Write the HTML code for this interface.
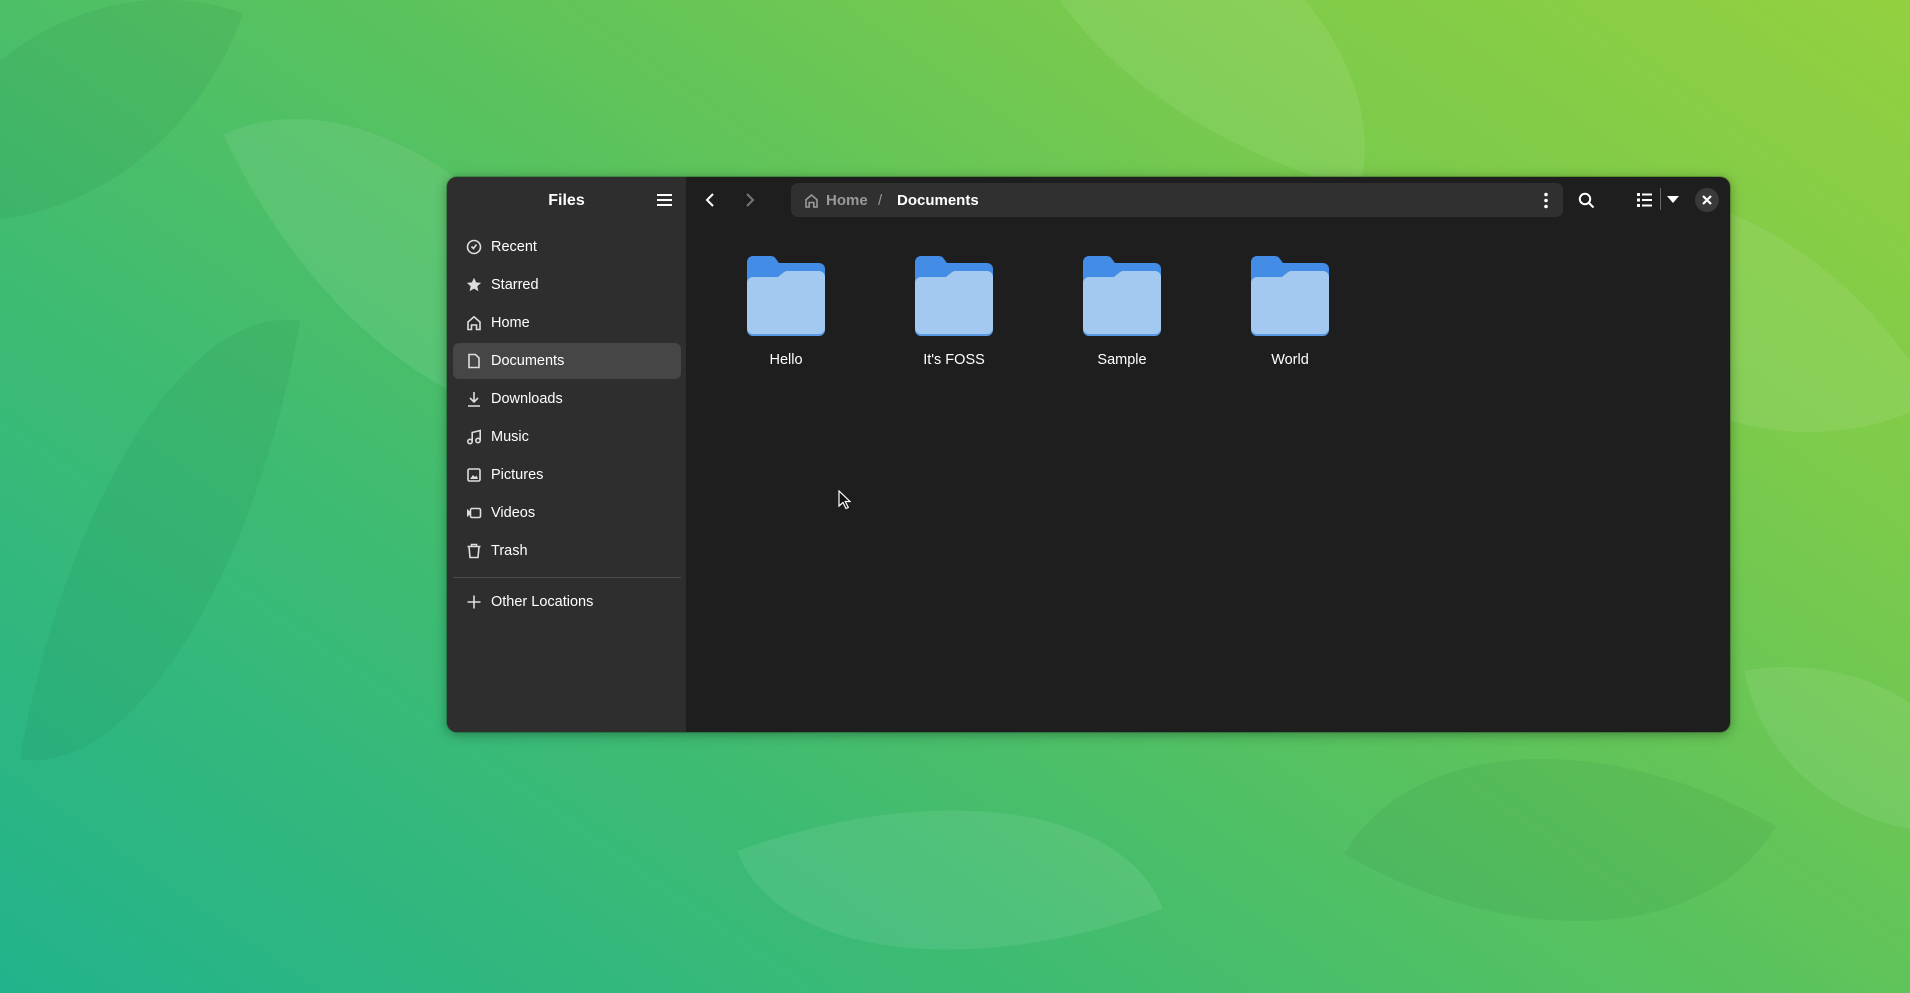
<!DOCTYPE html>
<html><head><meta charset="utf-8">
<style>
*{margin:0;padding:0;box-sizing:border-box}
html,body{width:1910px;height:993px;overflow:hidden}
body{font-family:"Liberation Sans",sans-serif}
.bg{position:absolute;left:0;top:0;width:1910px;height:993px;overflow:hidden;
background:linear-gradient(35deg,#22b38c 0%,#3dbb73 30%,#5cc35c 55%,#7dcb4b 78%,#93d040 100%);}
.leaf{position:absolute;border-radius:0 100% 0 100%;background:rgba(255,255,255,0.08)}
.leafd{position:absolute;border-radius:100% 0 100% 0;background:rgba(0,60,30,0.06)}
.win{position:absolute;left:447px;top:177px;width:1283px;height:555px;border-radius:10px;overflow:hidden;background:#1e1e1e;box-shadow:0 2px 12px rgba(0,0,0,0.35),0 0 0 1px rgba(0,0,0,0.2)}
.side{position:absolute;left:0;top:0;width:239px;height:555px;background:#2e2e2e}
.title{position:absolute;left:0;top:12px;width:239px;text-align:center;color:#fff;font-weight:bold;font-size:16px;line-height:23px}
.row{position:absolute;left:6px;width:228px;height:36px;border-radius:6px;color:#fff;font-size:14.5px;line-height:37px;padding-left:38px}
.row.sel{background:#464646}
.row svg{position:absolute;left:13px;top:10px}
.sep{position:absolute;left:6px;top:400px;width:228px;height:1px;background:#4a4a4a}
.crumb{position:absolute;left:344px;top:6px;width:772px;height:34px;border-radius:7px;background:#303030}
.fold{position:absolute;top:79px;width:78px}
.flabel{position:absolute;top:175px;width:160px;text-align:center;color:#fff;font-size:14.5px}
</style></head><body>
<div class="bg">
<div class="leaf" style="left:300px;top:60px;width:260px;height:420px;transform:rotate(-25deg)"></div>
<div class="leaf" style="left:980px;top:-120px;width:420px;height:260px;transform:rotate(15deg)"></div>
<div class="leafd" style="left:60px;top:300px;width:200px;height:480px;transform:rotate(10deg)"></div>
<div class="leaf" style="left:760px;top:780px;width:380px;height:200px;transform:rotate(-20deg)"></div>
<div class="leafd" style="left:1380px;top:720px;width:360px;height:240px;transform:rotate(30deg)"></div>
<div class="leaf" style="left:1560px;top:120px;width:300px;height:380px;transform:rotate(-30deg)"></div>
<div class="leaf" style="left:1760px;top:650px;width:220px;height:200px;transform:rotate(-10deg)"></div>
<div class="leafd" style="left:-60px;top:-40px;width:260px;height:300px;transform:rotate(20deg)"></div>
</div>

<div class="win">
 <div class="side">
  <div class="title">Files</div>
  <svg style="position:absolute;left:210px;top:16px" width="15" height="14"><g fill="#fff"><rect x="0" y="1" width="15" height="2"/><rect x="0" y="6" width="15" height="2"/><rect x="0" y="11" width="15" height="2"/></g></svg>
  <div class="row" style="top:52px"><svg width="16" height="16" fill="none" stroke="#ddd" stroke-width="1.6"><circle cx="8" cy="8" r="6.5"/><path d="M5.5 7.5l2 2 3-4"/></svg>Recent</div>
  <div class="row" style="top:90px"><svg width="16" height="16"><path d="M8 .8l2.1 4.6 5 .5-3.8 3.3 1.1 5L8 11.6 3.6 14.2l1.1-5L.9 5.9l5-.5z" fill="#ddd"/></svg>Starred</div>
  <div class="row" style="top:128px"><svg width="16" height="16" fill="none" stroke="#ddd" stroke-width="1.6"><path d="M2 14.5V7L8 1.8 14 7v7.5H10.5V10h-5v4.5z"/></svg>Home</div>
  <div class="row sel" style="top:166px"><svg width="16" height="16" fill="none" stroke="#ddd" stroke-width="1.6"><path d="M3 1.5h6.5l3.5 3.5v9.5H3z"/></svg>Documents</div>
  <div class="row" style="top:204px"><svg width="16" height="16" fill="none" stroke="#ddd" stroke-width="1.6"><path d="M8 1v10M4 7l4 4 4-4M2 15h12"/></svg>Downloads</div>
  <div class="row" style="top:242px"><svg width="16" height="16" fill="none" stroke="#ddd" stroke-width="1.6"><circle cx="4" cy="12.5" r="2.2"/><circle cx="12" cy="11.5" r="2.2"/><path d="M6.2 12.5V3.5l8-2v10"/></svg>Music</div>
  <div class="row" style="top:280px"><svg width="16" height="16" fill="none" stroke="#ddd" stroke-width="1.6"><rect x="2" y="2" width="12" height="12" rx="1.5"/><path d="M4 12l3-4 2 2 1.5-1.5L12 12z" fill="#ddd" stroke="none"/></svg>Pictures</div>
  <div class="row" style="top:318px"><svg width="16" height="16" fill="none" stroke="#ddd" stroke-width="1.6"><rect x="4.5" y="3.5" width="10" height="9" rx="1.5"/><path d="M1 4v8l3-2.5V6.5z" fill="#ddd" stroke="none"/></svg>Videos</div>
  <div class="row" style="top:356px"><svg width="16" height="16" fill="none" stroke="#ddd" stroke-width="1.6"><path d="M1.5 3.5h13M5.5 3.5V1.5h5v2M3 3.5l1 11h8l1-11"/></svg>Trash</div>
  <div class="sep"></div>
  <div class="row" style="top:407px"><svg width="16" height="16" fill="none" stroke="#ddd" stroke-width="1.6"><path d="M8 1.5v13M1.5 8h13"/></svg>Other Locations</div>
 </div>
 <svg style="position:absolute;left:258px;top:16px" width="10" height="14" fill="none" stroke="#fff" stroke-width="2"><path d="M8 1L2 7l6 6"/></svg>
 <svg style="position:absolute;left:298px;top:16px" width="10" height="14" fill="none" stroke="#777" stroke-width="2"><path d="M2 1l6 6-6 6"/></svg>
 <div class="crumb">
  <svg style="position:absolute;left:13px;top:10px" width="15" height="15" fill="none" stroke="#999" stroke-width="1.6"><path d="M2 14V6.8L7.5 2 13 6.8V14H9.8V9.5H5.2V14z"/></svg>
  <span style="position:absolute;left:35px;top:9px;color:#999;font-size:15px;font-weight:bold">Home</span>
  <span style="position:absolute;left:87px;top:9px;color:#999;font-size:15px">/</span>
  <span style="position:absolute;left:106px;top:9px;color:#fff;font-size:15px;font-weight:bold">Documents</span>
  <svg style="position:absolute;left:752px;top:9px" width="6" height="17" fill="#fff"><circle cx="3" cy="2.5" r="1.8"/><circle cx="3" cy="8.5" r="1.8"/><circle cx="3" cy="14.5" r="1.8"/></svg>
 </div>
 <svg style="position:absolute;left:1131px;top:15px" width="17" height="17" fill="none" stroke="#fff" stroke-width="2"><circle cx="7" cy="7" r="5.2"/><path d="M11 11l4.5 4.5"/></svg>
 <svg style="position:absolute;left:1190px;top:16px" width="16" height="14" fill="#fff"><rect x="0" y="0" width="3" height="3"/><rect x="5" y="0.5" width="10" height="2"/><rect x="0" y="5.5" width="3" height="3"/><rect x="5" y="6" width="10" height="2"/><rect x="0" y="11" width="3" height="3"/><rect x="5" y="11.5" width="10" height="2"/></svg>
 <div style="position:absolute;left:1213px;top:11px;width:1px;height:22px;background:#666"></div>
 <svg style="position:absolute;left:1220px;top:19px" width="12" height="7" fill="#fff"><path d="M0 0h12L6 7z"/></svg>
 <div style="position:absolute;left:1248px;top:11px;width:24px;height:24px;border-radius:50%;background:#3a3a3a"></div>
 <svg style="position:absolute;left:1255px;top:18px" width="10" height="10" stroke="#fff" stroke-width="2.2"><path d="M1 1l8 8M9 1l-8 8"/></svg>

 <svg width="0" height="0" style="position:absolute"><defs><g id="f"><path d="M0 6a6 6 0 0 1 6-6h18a6 6 0 0 1 5 3l3 4h40a6 6 0 0 1 6 6v40H0z" fill="#438de6"/><path d="M0 27a6 6 0 0 1 6-6h25l5-4a6 6 0 0 1 4-2h32a6 6 0 0 1 6 6v53a6 6 0 0 1-6 6H6a6 6 0 0 1-6-6z" fill="#5a9ae4"/><path d="M0 27a6 6 0 0 1 6-6h25l5-4a6 6 0 0 1 4-2h32a6 6 0 0 1 6 6v51a6 6 0 0 1-6 6H6a6 6 0 0 1-6-6z" fill="#a4c9f0"/></g></defs></svg>
 <svg class="fold" style="left:300px" width="78" height="82"><use href="#f"/></svg>
 <svg class="fold" style="left:468px" width="78" height="82"><use href="#f"/></svg>
 <svg class="fold" style="left:636px" width="78" height="82"><use href="#f"/></svg>
 <svg class="fold" style="left:804px" width="78" height="82"><use href="#f"/></svg>
 <div class="flabel" style="left:259px">Hello</div>
 <div class="flabel" style="left:427px">It's FOSS</div>
 <div class="flabel" style="left:595px">Sample</div>
 <div class="flabel" style="left:763px">World</div>
 <svg style="position:absolute;left:391px;top:313px" width="13" height="20"><path d="M1 1v15l4-3.5 3 6 2.3-1-3-6H12z" fill="#111" stroke="#fff" stroke-width="1.2"/></svg>
</div>
</body></html>
